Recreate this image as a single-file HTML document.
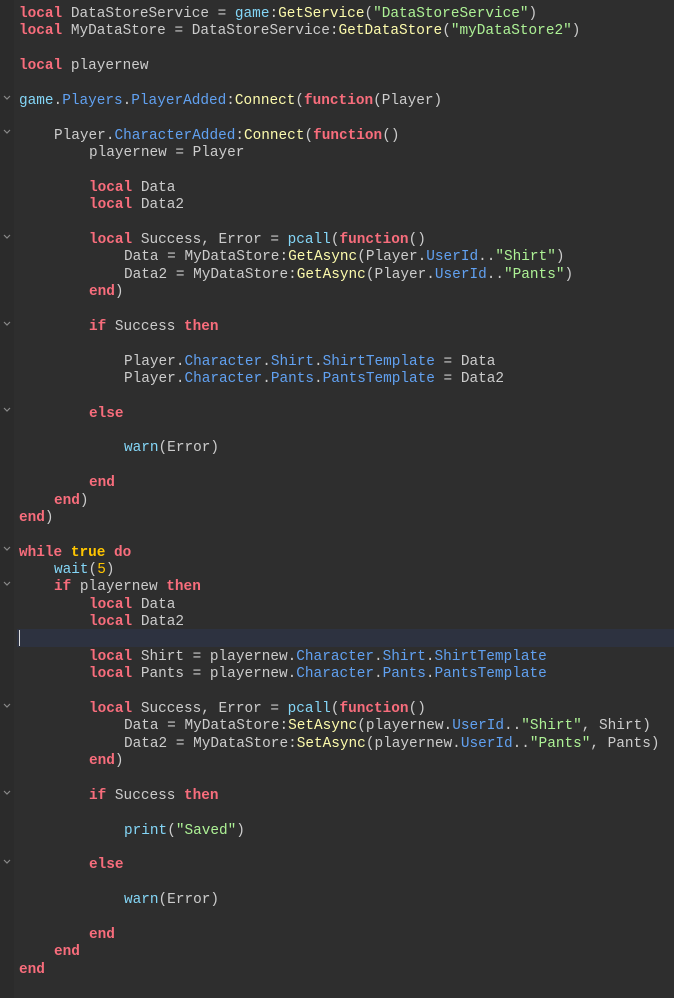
<!DOCTYPE html>
<html><head><meta charset="utf-8"><style>
body{margin:0;background:#2e2e2e;width:674px;height:998px;overflow:hidden;position:relative}
.g{position:absolute;left:0;top:0;width:14px;height:998px;background:#2b2b2b}
.c{position:absolute;left:19px;top:6px;font-family:"Liberation Mono",monospace;font-size:14.4px;line-height:17.38px;color:#cccccc;white-space:pre;tab-size:35px;-moz-tab-size:35px}
.hl{position:absolute;left:17px;right:0;top:629px;height:18px;background:#2d3240}
.cur{position:absolute;left:19px;top:630px;width:1px;height:16px;background:#ddd}
.k{color:#f86d7c;font-weight:bold}
.t{color:#ffc600;font-weight:bold}
.n{color:#ffc600}
.b{color:#84d6f7}
.p{color:#61a1f1}
.m{color:#fdfbac}
.s{color:#adf195}
</style></head><body>
<div class="g"></div>
<div class="hl"></div><div class="cur"></div>
<svg width="14" height="998" style="position:absolute;left:0;top:0" fill="none" stroke="#8a8a8a" stroke-width="1.2">
<path d="M4 96l3 3 3-3M4 130l3 3 3-3M4 235l3 3 3-3M4 322l3 3 3-3M4 408l3 3 3-3M4 547l3 3 3-3M4 582l3 3 3-3M4 704l3 3 3-3M4 791l3 3 3-3M4 860l3 3 3-3"/>
</svg>
<div class="c"><span class="k">local</span> DataStoreService = <span class="b">game</span>:<span class="m">GetService</span>(<span class="s">"DataStoreService"</span>)
<span class="k">local</span> MyDataStore = DataStoreService:<span class="m">GetDataStore</span>(<span class="s">"myDataStore2"</span>)

<span class="k">local</span> playernew

<span class="b">game</span>.<span class="p">Players</span>.<span class="p">PlayerAdded</span>:<span class="m">Connect</span>(<span class="k">function</span>(Player)

	Player.<span class="p">CharacterAdded</span>:<span class="m">Connect</span>(<span class="k">function</span>()
		playernew = Player

		<span class="k">local</span> Data
		<span class="k">local</span> Data2

		<span class="k">local</span> Success, Error = <span class="b">pcall</span>(<span class="k">function</span>()
			Data = MyDataStore:<span class="m">GetAsync</span>(Player.<span class="p">UserId</span>..<span class="s">"Shirt"</span>)
			Data2 = MyDataStore:<span class="m">GetAsync</span>(Player.<span class="p">UserId</span>..<span class="s">"Pants"</span>)
		<span class="k">end</span>)

		<span class="k">if</span> Success <span class="k">then</span>

			Player.<span class="p">Character</span>.<span class="p">Shirt</span>.<span class="p">ShirtTemplate</span> = Data
			Player.<span class="p">Character</span>.<span class="p">Pants</span>.<span class="p">PantsTemplate</span> = Data2

		<span class="k">else</span>

			<span class="b">warn</span>(Error)

		<span class="k">end</span>
	<span class="k">end</span>)
<span class="k">end</span>)

<span class="k">while</span> <span class="t">true</span> <span class="k">do</span>
	<span class="b">wait</span>(<span class="n">5</span>)
	<span class="k">if</span> playernew <span class="k">then</span>
		<span class="k">local</span> Data
		<span class="k">local</span> Data2

		<span class="k">local</span> Shirt = playernew.<span class="p">Character</span>.<span class="p">Shirt</span>.<span class="p">ShirtTemplate</span>
		<span class="k">local</span> Pants = playernew.<span class="p">Character</span>.<span class="p">Pants</span>.<span class="p">PantsTemplate</span>

		<span class="k">local</span> Success, Error = <span class="b">pcall</span>(<span class="k">function</span>()
			Data = MyDataStore:<span class="m">SetAsync</span>(playernew.<span class="p">UserId</span>..<span class="s">"Shirt"</span>, Shirt)
			Data2 = MyDataStore:<span class="m">SetAsync</span>(playernew.<span class="p">UserId</span>..<span class="s">"Pants"</span>, Pants)
		<span class="k">end</span>)

		<span class="k">if</span> Success <span class="k">then</span>

			<span class="b">print</span>(<span class="s">"Saved"</span>)

		<span class="k">else</span>

			<span class="b">warn</span>(Error)

		<span class="k">end</span>
	<span class="k">end</span>
<span class="k">end</span></div>
</body></html>
